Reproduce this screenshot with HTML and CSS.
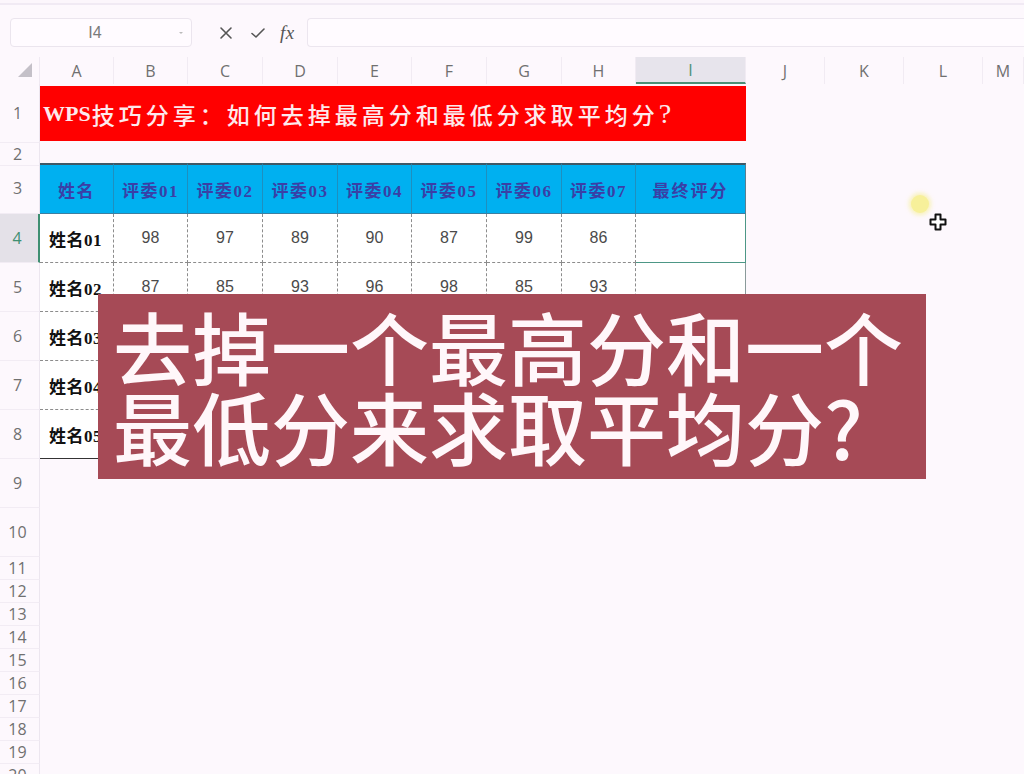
FILE: index.html
```html
<!DOCTYPE html>
<html lang="zh-CN">
<head>
<meta charset="utf-8">
<title>WPS技巧分享</title>
<link rel="stylesheet" href="styles.css">
</head>
<body>
<div class="app">
  <div class="topline"></div>
  <div class="fbar">
    <div class="namebox"><span class="nb-text">I4</span><span class="caret"></span></div>
    <div class="fbtns">
      <svg class="ic ic-x" width="14" height="14" viewBox="0 0 14 14"><path d="M2 2 L12 12 M12 2 L2 12" stroke="#555" stroke-width="1.6" fill="none" stroke-linecap="round"/></svg>
      <svg class="ic ic-check" width="16" height="14" viewBox="0 0 16 14"><path d="M2 7.5 L6 11 L14 3" stroke="#555" stroke-width="1.6" fill="none" stroke-linecap="round" stroke-linejoin="round"/></svg>
      <span class="fx">fx</span>
    </div>
    <div class="finput"></div>
  </div>

  <div class="sheet">
    <div class="row r-colhead">
      <div class="corner"><svg width="14" height="14" viewBox="0 0 14 14"><path d="M14 0 L14 14 L0 14 Z" fill="#c4c0c8"/></svg></div>
      <div class="ch">A</div><div class="ch">B</div><div class="ch">C</div><div class="ch">D</div>
      <div class="ch">E</div><div class="ch">F</div><div class="ch">G</div><div class="ch">H</div>
      <div class="ch ch-sel">I</div><div class="ch">J</div><div class="ch">K</div><div class="ch">L</div>
      <div class="ch">M</div>
    </div>

    <div class="row r1">
      <div class="rh">1</div>
      <div class="title"><span class="t-latin">WPS</span>技巧分享：如何去掉最高分和最低分求取平均分<span class="t-q">?</span></div>
    </div>

    <div class="row r2"><div class="rh">2</div></div>

    <div class="row r3">
      <div class="rh">3</div>
      <div class="th">姓名</div><div class="th">评委01</div><div class="th">评委02</div><div class="th">评委03</div>
      <div class="th">评委04</div><div class="th">评委05</div><div class="th">评委06</div><div class="th">评委07</div>
      <div class="th th-last">最终评分</div>
    </div>

    <div class="row rd">
      <div class="rh rh-sel">4</div>
      <div class="td nm">姓名01</div><div class="td">98</div><div class="td">97</div><div class="td">89</div>
      <div class="td">90</div><div class="td">87</div><div class="td">99</div><div class="td">86</div>
      <div class="td td-last td-sel"></div>
    </div>
    <div class="row rd">
      <div class="rh">5</div>
      <div class="td nm">姓名02</div><div class="td">87</div><div class="td">85</div><div class="td">93</div>
      <div class="td">96</div><div class="td">98</div><div class="td">85</div><div class="td">93</div>
      <div class="td td-last"></div>
    </div>
    <div class="row rd">
      <div class="rh">6</div>
      <div class="td nm">姓名03</div><div class="td"></div><div class="td"></div><div class="td"></div>
      <div class="td"></div><div class="td"></div><div class="td"></div><div class="td"></div>
      <div class="td td-last"></div>
    </div>
    <div class="row rd">
      <div class="rh">7</div>
      <div class="td nm">姓名04</div><div class="td"></div><div class="td"></div><div class="td"></div>
      <div class="td"></div><div class="td"></div><div class="td"></div><div class="td"></div>
      <div class="td td-last"></div>
    </div>
    <div class="row rd">
      <div class="rh">8</div>
      <div class="td nm tb">姓名05</div><div class="td tb"></div><div class="td tb"></div><div class="td tb"></div>
      <div class="td tb"></div><div class="td tb"></div><div class="td tb"></div><div class="td tb"></div>
      <div class="td td-last tb"></div>
    </div>
    <div class="row rd"><div class="rh">9</div></div>
    <div class="row rd"><div class="rh">10</div></div>
    <div class="row rs"><div class="rh">11</div></div>
    <div class="row rs"><div class="rh">12</div></div>
    <div class="row rs"><div class="rh">13</div></div>
    <div class="row rs"><div class="rh">14</div></div>
    <div class="row rs"><div class="rh">15</div></div>
    <div class="row rs"><div class="rh">16</div></div>
    <div class="row rs"><div class="rh">17</div></div>
    <div class="row rs"><div class="rh">18</div></div>
    <div class="row rs"><div class="rh">19</div></div>
    <div class="row rs"><div class="rh">20</div></div>
  </div>

  <div class="overlay">
    <span class="ov-line">去掉一个最高分和一个</span>
    <span class="ov-line">最低分来求取平均分?</span>
  </div>

  <div class="dot"></div>
  <svg class="cursor" width="18" height="18" viewBox="0 0 18 18"><path d="M6.5 1.5 H11.5 V6.5 H16.5 V11.5 H11.5 V16.5 H6.5 V11.5 H1.5 V6.5 H6.5 Z" fill="#fff" stroke="#111" stroke-width="2" stroke-linejoin="round"/></svg>
</div>
</body>
</html>
```

FILE: styles.css
```css
* { box-sizing: border-box; }
html, body {
  margin: 0;
  padding: 0;
  background: #fdf8fd;
}
body {
  font-family: "Open Sans", "Noto Sans CJK SC", sans-serif;
  color: #666;
}
.app {
  position: relative;
  width: 1024px;
  height: 774px;
  overflow: hidden;
  background: #fdf8fd;
}
.topline {
  height: 5px;
  border-bottom: 2px solid #f1eaf4;
  background: #fcf6fc;
}
.fbar {
  height: 52px;
  display: flex;
  align-items: flex-start;
  padding-top: 13px;
}
.namebox {
  margin-left: 10px;
  width: 182px;
  height: 29px;
  border: 1px solid #ebe5ee;
  border-radius: 4px;
  background: #fffbff;
  display: flex;
  align-items: center;
}
.nb-text {
  flex: 1;
  text-align: center;
  font-family: "Liberation Sans", sans-serif;
  font-size: 16px;
  color: #7a7a7a;
  padding-left: 2px;
}
.caret {
  width: 10px;
  height: 10px;
  margin-right: 4px;
  position: relative;
}
.caret::after {
  content: "";
  position: absolute;
  left: 2px;
  top: 4px;
  border-left: 2px solid transparent;
  border-right: 2px solid transparent;
  border-top: 2px solid #bbb;
}
.fbtns {
  display: flex;
  align-items: center;
  height: 29px;
  margin-left: 27px;
  gap: 17px;
}
.ic { display: block; }
.fx {
  font-family: "Liberation Serif", serif;
  font-style: italic;
  font-size: 19px;
  color: #555;
  margin-left: -3px;
  letter-spacing: 0.5px;
}
.finput {
  flex: 1;
  margin-left: 12px;
  height: 29px;
  border: 1px solid #ece6ef;
  border-right: none;
  border-radius: 4px 0 0 4px;
  background: #fffbff;
}

/* sheet grid */
.row {
  display: grid;
  grid-template-columns: 40px 74px 74px 75px 75px 74px 75px 75px 74px 110px 79px 79px 79px 1fr;
}
.r-colhead { height: 27px; }
.r1 { height: 59px; }
.r2 { height: 20px; }
.r3 { height: 51px; }
.rd { height: 49px; }
.rs { height: 23px; }

.corner {
  display: flex;
  align-items: flex-end;
  justify-content: flex-end;
  padding: 0 7px 7px 0;
  border-right: 1px solid #efe9f2;
}
.ch {
  display: flex;
  align-items: center;
  justify-content: center;
  font-size: 16px;
  color: #707070;
  border-right: 1px solid #f1ebf3;
}
.ch-sel {
  background: #e7e4ec;
  border-bottom: 2px solid #4b8f76;
  color: #4b8f76;
}
.rh {
  grid-column: 1;
  display: flex;
  align-items: center;
  justify-content: center;
  padding-right: 4px;
  font-size: 16px;
  color: #707070;
  border-right: 1px solid #ece6ef;
  border-bottom: 1px solid #f2ecf4;
}
.rh-sel {
  background: #e4e1e8;
  color: #3f8f72;
  border-right: 2px solid #3f8f72;
}

.title {
  grid-column: 2 / 11;
  margin: 2px 0;
  background: #ff0000;
  color: #fde9ec;
  display: flex;
  align-items: center;
  padding-left: 3px;
  font-family: "Liberation Serif", "Noto Sans CJK SC", serif;
  font-size: 23px;
  font-weight: 500;
  letter-spacing: 4px;
  white-space: nowrap;
}
.t-latin {
  font-size: 22px;
  letter-spacing: 0;
  font-weight: 700;
  margin-right: 1px;
}
.t-q {
  font-size: 28px;
  font-weight: 400;
  letter-spacing: 0;
}

.th {
  background: #00b0f0;
  border-top: 2px solid #3f5866;
  border-right: 1px solid #1e8fbf;
  border-bottom: 1px solid #3d7fa0;
  display: flex;
  align-items: center;
  justify-content: center;
  font-family: "Liberation Serif", "Noto Sans CJK SC", serif;
  font-size: 17px;
  font-weight: 700;
  letter-spacing: 1.5px;
  color: #3a3fa6;
  white-space: nowrap;
}
.th-last { border-right: 1px solid #5b7f90; letter-spacing: 2px; }

.td {
  background: #fff;
  border-right: 1px dashed #8c8c8c;
  border-bottom: 1px dashed #8c8c8c;
  display: flex;
  align-items: center;
  justify-content: center;
  font-family: "Liberation Sans", sans-serif;
  font-size: 16px;
  color: #4a4a4a;
}
.nm {
  justify-content: flex-start;
  padding-left: 9px;
  font-family: "Liberation Serif", "Noto Sans CJK SC", serif;
  font-size: 17px;
  font-weight: 700;
  letter-spacing: 0.5px;
  color: #111;
  white-space: nowrap;
  overflow: hidden;
}
.td-last { border-right: 1px solid #8a9a9a; }
.td-sel {
  border-right: 1px solid #4d9786;
  border-bottom: 1px solid #4d9786;
}
.tb { border-bottom: 1px solid #333; }

/* overlay caption */
.overlay {
  position: absolute;
  left: 98px;
  top: 294px;
  width: 828px;
  height: 185px;
  background: #a64a56;
  padding: 12px 0 0 15px;
  color: #fff7fa;
  font-family: "Noto Sans CJK SC", sans-serif;
  font-weight: 500;
  font-size: 79px;
  line-height: 80px;
  white-space: nowrap;
}
.ov-line { display: block; }

.dot {
  position: absolute;
  left: 911px;
  top: 195px;
  width: 18px;
  height: 18px;
  border-radius: 50%;
  background: #f7f09a;
  box-shadow: 0 0 4px 2px rgba(247, 240, 154, 0.7);
}
.cursor {
  position: absolute;
  left: 929px;
  top: 213px;
}
```
